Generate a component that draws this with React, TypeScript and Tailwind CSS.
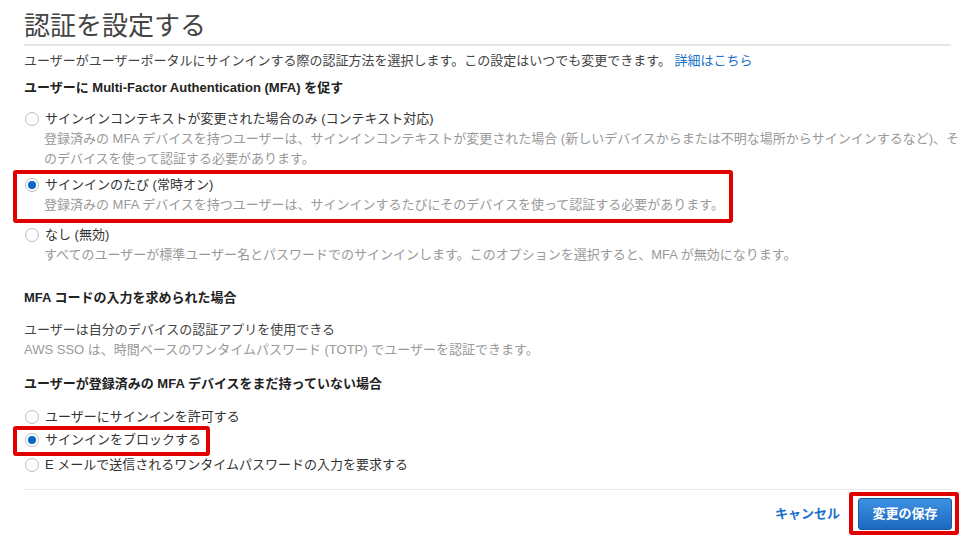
import React from 'react'

function Radio({ checked }: { checked?: boolean }) {
  return (
    <span className="ml-px mr-[6px] flex h-[14px] w-[14px] shrink-0 items-center justify-center rounded-full border border-[#bdbdbd] bg-white">
      {checked && <span className="h-[8px] w-[8px] rounded-full bg-[#0b66c9]" />}
    </span>
  )
}

function Option({ label, desc, checked }: { label: string; desc?: React.ReactNode; checked?: boolean }) {
  return (
    <div>
      <div className="flex h-[20px] items-center text-[#333]">
        <Radio checked={checked} />
        <span>{label}</span>
      </div>
      {desc && <div className="whitespace-nowrap pl-[20px] text-[#999]">{desc}</div>}
    </div>
  )
}

export default function App() {
  return (
    <div
      className="min-h-screen bg-white pl-6 pr-[9px] pt-[10px] text-[13px] leading-[20px]"
      style={{ fontFamily: '"Liberation Sans", "Noto Sans CJK JP", sans-serif' }}
    >
      <h1 className="text-[26px] leading-[32px] text-[#444]">認証を設定する</h1>
      <div className="mt-[2px] h-[2px] bg-[#e6e6e6]" />

      <p className="mt-[5px] text-[#444]">
        ユーザーがユーザーポータルにサインインする際の認証方法を選択します。この設定はいつでも変更できます。{' '}
        <a className="text-[#1a70c8]">詳細はこちら</a>
      </p>

      <h2 className="mt-[7px] font-bold text-[#222]">ユーザーに Multi-Factor Authentication (MFA) を促す</h2>

      <div className="mt-[11px]">
        <Option
          label="サインインコンテキストが変更された場合のみ (コンテキスト対応)"
          desc={
            <>
              登録済みの MFA デバイスを持つユーザーは、サインインコンテキストが変更された場合 (新しいデバイスからまたは不明な場所からサインインするなど)、そ
              <br />
              のデバイスを使って認証する必要があります。
            </>
          }
        />
      </div>

      <div className="-ml-[11px] mt-[1px] w-[720px] rounded-[3px] border-4 border-[#e00000] pb-[4px] pl-[8px] pt-px">
        <div className="-ml-px">
          <Option
            checked
            label="サインインのたび (常時オン)"
            desc="登録済みの MFA デバイスを持つユーザーは、サインインするたびにそのデバイスを使って認証する必要があります。"
          />
        </div>
      </div>

      <div className="mt-[2px]">
        <Option
          label="なし (無効)"
          desc="すべてのユーザーが標準ユーザー名とパスワードでのサインインします。このオプションを選択すると、MFA が無効になります。"
        />
      </div>

      <h2 className="mt-[23px] font-bold text-[#222]">MFA コードの入力を求められた場合</h2>

      <div className="mt-[12px]">
        <div className="text-[#444]">ユーザーは自分のデバイスの認証アプリを使用できる</div>
        <div className="text-[#999]">AWS SSO は、時間ベースのワンタイムパスワード (TOTP) でユーザーを認証できます。</div>
      </div>

      <h2 className="mt-[14px] font-bold text-[#222]">ユーザーが登録済みの MFA デバイスをまだ持っていない場合</h2>

      <div className="mt-[13px]">
        <Option label="ユーザーにサインインを許可する" />
      </div>
      <div className="-ml-[11px] -mt-px w-[197px] rounded-[3px] border-4 border-[#e00000] pb-[2px] pl-[7px]">
        <Option checked label="サインインをブロックする" />
      </div>
      <div className="-mt-px">
        <Option label="E メールで送信されるワンタイムパスワードの入力を要求する" />
      </div>

      <div className="mt-[14px] h-px bg-[#eaeaea]" />

      <div className="mt-[2px] flex items-center justify-end">
        <a className="mr-[9px] font-bold text-[#1a70c8]">キャンセル</a>
        <div className="-mr-[8px] rounded-[3px] border-4 border-[#e00000] pb-px pl-[5px] pr-[3px] pt-[2px]">
          <button className="h-[32px] w-[94px] rounded-[3px] border border-[#1a5aa3] bg-gradient-to-b from-[#3d92e2] to-[#1c67c0] font-bold text-white">
            変更の保存
          </button>
        </div>
      </div>
    </div>
  )
}
